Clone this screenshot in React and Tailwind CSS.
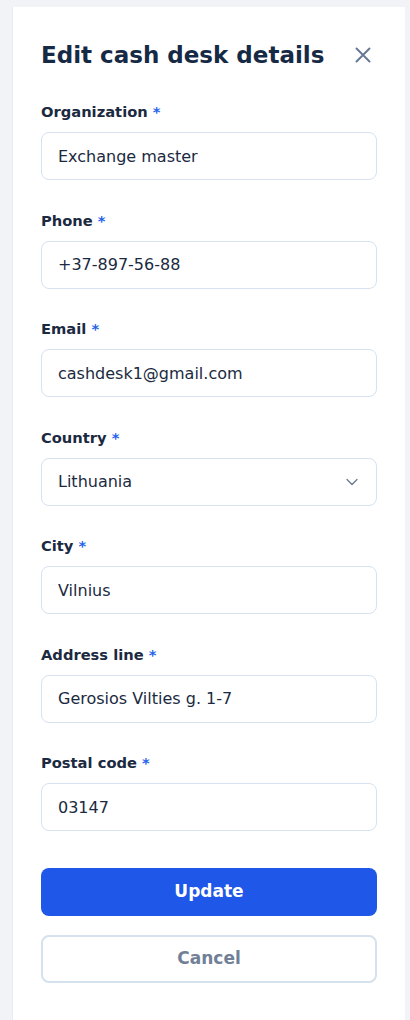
import React, { useState } from 'react';

const fields = [
  { name: 'organization', label: 'Organization', value: 'Exchange master' },
  { name: 'phone', label: 'Phone', value: '+37-897-56-88' },
  { name: 'email', label: 'Email', value: 'cashdesk1@gmail.com' },
  { name: 'country', label: 'Country', value: 'Lithuania', select: true },
  { name: 'city', label: 'City', value: 'Vilnius' },
  { name: 'address', label: 'Address line', value: 'Gerosios Vilties g. 1-7' },
  { name: 'postal', label: 'Postal code', value: '03147' },
];

const Field = ({ field, value, onChange }) => (
  <div className="flex flex-col">
    <label className="h-[22px] text-[14.7px] leading-[22px] font-bold text-[#1b2a41]">
      {field.label} <span className="text-[#2563eb]">*</span>
    </label>
    <div className="relative mt-[9px]">
      <input
        value={value}
        onChange={(e) => onChange(field.name, e.target.value)}
        readOnly={field.select}
        className="w-full h-[48px] rounded-[8px] border border-[#d6e2ef] bg-white px-4 text-[16px] text-[#1b2a41] outline-none"
      />
      {field.select && (
        <svg
          className="absolute right-[19px] top-[20px]"
          width="12"
          height="8"
          viewBox="0 0 12 8"
          fill="none"
        >
          <path d="M1 1.5l5 5 5-5" stroke="#6b7a90" strokeWidth="1.3" strokeLinecap="round" strokeLinejoin="round" />
        </svg>
      )}
    </div>
  </div>
);

const App = () => {
  const [values, setValues] = useState(
    Object.fromEntries(fields.map((f) => [f.name, f.value]))
  );

  const handleChange = (name, value) => setValues({ ...values, [name]: value });

  return (
    <div className="min-h-[1020px] bg-[#f1f3f6] pl-[12px] pt-[7px]" style={{ fontFamily: '"DejaVu Sans", sans-serif' }}>
      <div className="w-[393px] min-h-[1013px] bg-white border-l border-[#e3ecf8] px-[28px] pt-[33px] pb-10">
        <div className="flex items-center justify-between">
          <h2 className="text-[23px] leading-[30px] font-bold text-[#172a45]">Edit cash desk details</h2>
          <button className="mr-[6px] text-[#667a95]">
            <svg width="16" height="16" viewBox="0 0 16 16" fill="none">
              <path d="M1.5 1.5l13 13M14.5 1.5l-13 13" stroke="currentColor" strokeWidth="2" strokeLinecap="round" />
            </svg>
          </button>
        </div>
        <div className="mt-[31px] flex flex-col gap-[29.5px]">
          {fields.map((field) => (
            <Field key={field.name} field={field} value={values[field.name]} onChange={handleChange} />
          ))}
        </div>
        <div className="mt-[37px] flex flex-col gap-[19px]">
          <button className="h-[48px] rounded-[8px] bg-[#1f57e8] text-[17px] font-bold text-white">Update</button>
          <button className="h-[48px] rounded-[8px] border-2 border-[#d5e1ec] bg-white text-[17px] font-bold text-[#718096]">Cancel</button>
        </div>
      </div>
    </div>
  );
};

export default App;
